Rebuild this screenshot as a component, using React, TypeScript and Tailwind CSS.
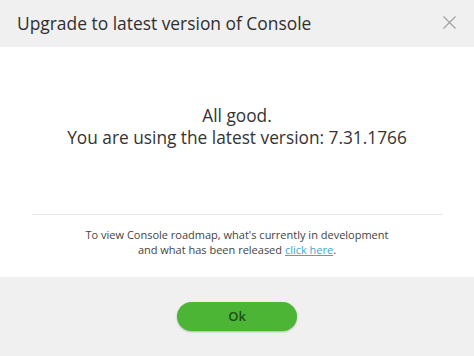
export default function App() {
  return (
    <div className="w-[474px] h-[356px] flex flex-col bg-white font-['Open_Sans',sans-serif] text-[#333]">
      {/* Header */}
      <div className="h-[47px] shrink-0 bg-[#f0f0f0] flex items-center justify-between pl-[17px] pr-[18px] pb-[2px]">
        <h1 className="text-[17.4px] leading-[20px] text-[#2f2f2f]">Upgrade to latest version of Console</h1>
        <button className="w-[14px] h-[14px] flex items-center justify-center text-[#a3a3a3]" aria-label="Close">
          <svg width="13" height="13" viewBox="0 0 13 13" fill="none" stroke="currentColor" strokeWidth="1.3">
            <path d="M0.5 0.5 L12.5 12.5 M12.5 0.5 L0.5 12.5" />
          </svg>
        </button>
      </div>

      {/* Body */}
      <div className="h-[230px] shrink-0 flex flex-col pt-[58px] px-[32px]">
        <div className="text-center text-[17.3px] leading-[22px] text-[#333]">
          <p>All good.</p>
          <p>You are using the latest version: 7.31.1766</p>
        </div>
        <div className="mt-[65px] h-px bg-[#e6e6e6]" />
        <p className="mt-[12px] text-center text-[11px] leading-[15px] text-[#444]">
          To view Console roadmap, what's currently in development
          <br />
          and what has been released{' '}
          <a href="#" className="text-[#45a6d3] underline">
            click here
          </a>
          .
        </p>
      </div>

      {/* Footer */}
      <div className="flex-1 bg-[#f0f0f0] flex justify-center pt-[25px]">
        <button className="w-[120px] h-[29px] rounded-full bg-[#4db535] shadow-[0_1px_2px_rgba(0,0,0,0.25)] text-[13px] font-semibold text-[#1c4f16]">
          Ok
        </button>
      </div>
    </div>
  )
}
